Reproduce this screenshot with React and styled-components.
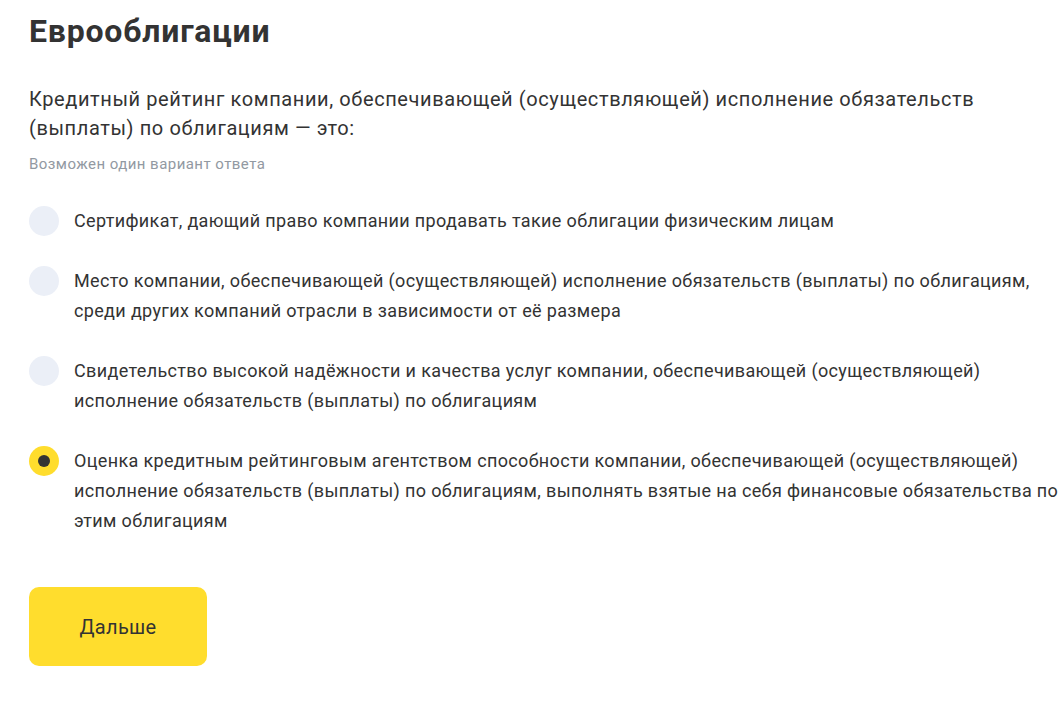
import React, { useState } from 'react'
import styled, { createGlobalStyle } from 'styled-components'

const GlobalStyle = createGlobalStyle`
    body {
        margin: 0;
        background: #fff;
        font-family: Roboto, "Noto Sans", sans-serif;
        color: #333;
    }
`

const options = [
    'Сертификат, дающий право компании продавать такие облигации физическим лицам',
    'Место компании, обеспечивающей (осуществляющей) исполнение обязательств (выплаты) по облигациям, среди других компаний отрасли в зависимости от её размера',
    'Свидетельство высокой надёжности и качества услуг компании, обеспечивающей (осуществляющей) исполнение обязательств (выплаты) по облигациям',
    'Оценка кредитным рейтинговым агентством способности компании, обеспечивающей (осуществляющей) исполнение обязательств (выплаты) по облигациям, выполнять взятые на себя финансовые обязательства по этим облигациям',
]

function App() {
    const [selected, setSelected] = useState(3)

    return (
        <Page>
            <GlobalStyle />
            <Title>Еврооблигации</Title>
            <Question>
                Кредитный рейтинг компании, обеспечивающей (осуществляющей) исполнение обязательств (выплаты) по облигациям — это:
            </Question>
            <Hint>Возможен один вариант ответа</Hint>
            <Options>
                {options.map((text, i) => (
                    <Option key={i} onClick={() => setSelected(i)}>
                        <Radio checked={selected === i} />
                        <OptionText>{text}</OptionText>
                    </Option>
                ))}
            </Options>
            <NextButton>Дальше</NextButton>
        </Page>
    )
}

export default App

const Page = styled.div`
    padding: 13px 0 40px 29px;
`

const Title = styled.h1`
    margin: 0;
    font-size: 32px;
    line-height: 36px;
    font-weight: 700;
    letter-spacing: 0.8px;
    color: #333;
`

const Question = styled.p`
    margin: 36px 0 0;
    font-size: 20px;
    line-height: 29px;
    letter-spacing: 0.6px;
    max-width: 1000px;
    color: #333;
`

const Hint = styled.div`
    margin-top: 12px;
    font-size: 15px;
    line-height: 18px;
    letter-spacing: 0.45px;
    color: #9299a2;
`

const Options = styled.div`
    display: flex;
    flex-direction: column;
    gap: 30px;
    margin-top: 33px;
`

const Option = styled.label`
    display: flex;
    align-items: flex-start;
    gap: 15px;
    cursor: pointer;
`

const Radio = styled.span`
    flex: none;
    position: relative;
    width: 30px;
    height: 30px;
    border-radius: 50%;
    background: ${p => (p.checked ? '#ffdd2d' : '#ebeff7')};

    &::after {
        content: '';
        display: ${p => (p.checked ? 'block' : 'none')};
        position: absolute;
        left: 9px;
        top: 9px;
        width: 12px;
        height: 12px;
        border-radius: 50%;
        background: #333;
    }
`

const OptionText = styled.span`
    font-size: 18px;
    line-height: 30px;
    letter-spacing: 0.35px;
    color: #333;
`

const NextButton = styled.button`
    margin-top: 51px;
    width: 178px;
    height: 79px;
    border: none;
    border-radius: 10px;
    background: #ffdd2d;
    font-family: inherit;
    font-size: 20px;
    letter-spacing: 0.3px;
    color: #333;
    cursor: pointer;
`
